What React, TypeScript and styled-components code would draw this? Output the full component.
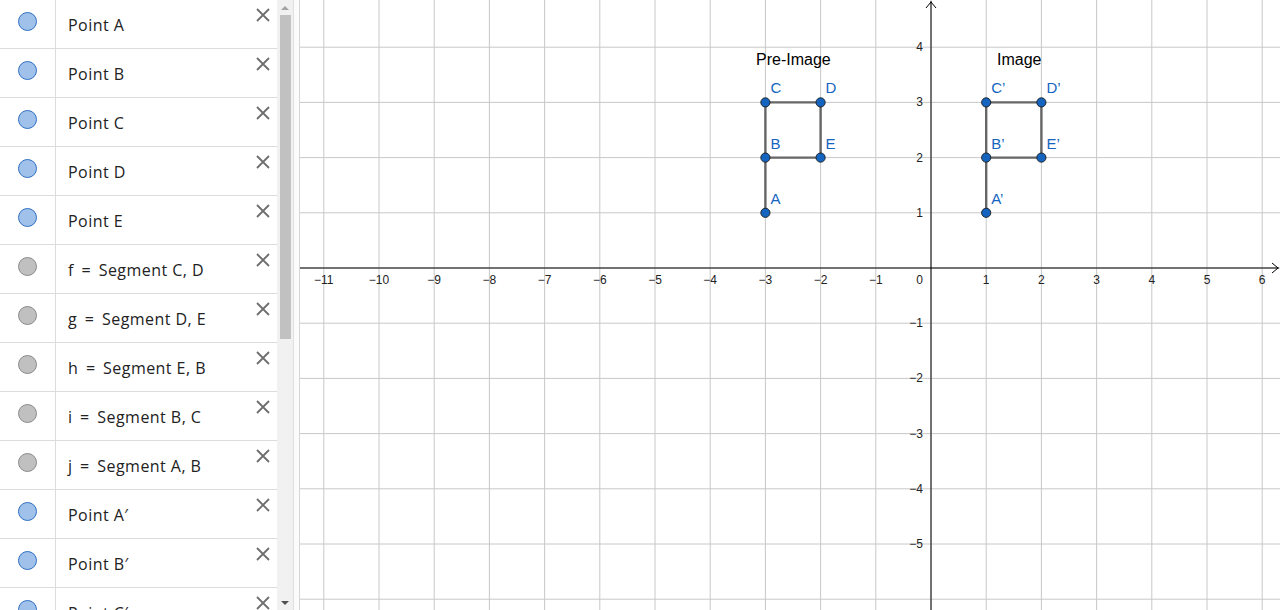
import React from 'react'
import styled, { createGlobalStyle } from 'styled-components'

const GlobalStyle = createGlobalStyle`
  html, body {
    margin: 0;
    padding: 0;
    background: #ffffff;
    overflow: hidden;
  }
`

const Layout = styled.div`
  display: flex;
  width: 1280px;
  height: 610px;
  overflow: hidden;
  font-family: 'Open Sans', 'Noto Sans', sans-serif;
`

const AlgebraPanel = styled.aside`
  display: flex;
  width: 293px;
  height: 100%;
  flex-shrink: 0;
`

const List = styled.div`
  width: 277px;
  height: 100%;
  overflow: hidden;
`

const Row = styled.div`
  display: flex;
  height: 48px;
  border-bottom: 1px solid #dcdcdc;
`

const MarbleCell = styled.div`
  width: 56px;
  flex-shrink: 0;
  border-right: 1px solid #dcdcdc;
  display: flex;
  justify-content: center;
  padding-top: 12px;
  box-sizing: border-box;
`

const Marble = styled.span<{ $kind: 'point' | 'segment' }>`
  width: 17px;
  height: 17px;
  border-radius: 50%;
  background: ${(p) => (p.$kind === 'point' ? '#9fc1ea' : '#c0c0c0')};
  border: 1px solid ${(p) => (p.$kind === 'point' ? '#2f6fc4' : '#8a8a8a')};
`

const Label = styled.div`
  flex: 1;
  padding: 14px 0 0 12px;
  font-size: 16px;
  letter-spacing: 0.45px;
  color: #222;
  white-space: nowrap;
`

const Equals = styled.span`
  margin: 0 3px;
`

const CloseButton = styled.button`
  width: 24px;
  height: 24px;
  margin: 3px 2px 0 0;
  padding: 0;
  border: none;
  background: none;
  display: flex;
  align-items: center;
  justify-content: center;
  color: #6e6e6e;
`

const Scrollbar = styled.div`
  width: 16px;
  height: 100%;
  background: #f1f1f1;
  display: flex;
  flex-direction: column;
  align-items: center;
`

const ScrollArrow = styled.div<{ $down?: boolean }>`
  height: 15px;
  width: 100%;
  display: flex;
  align-items: center;
  justify-content: center;
  margin-top: ${(p) => (p.$down ? 'auto' : '0')};
  &::after {
    content: '';
    border-left: 4px solid transparent;
    border-right: 4px solid transparent;
    ${(p) => (p.$down ? 'border-top: 4px solid #505050;' : 'border-bottom: 4px solid #a3a3a3;')}
  }
`

const Thumb = styled.div`
  width: 11px;
  height: 324px;
  background: #c1c1c1;
`

const Splitter = styled.div`
  width: 5px;
  flex-shrink: 0;
  background: #fbfbfb;
  border-left: 1px solid #e0e0e0;
  border-right: 1px solid #d6d6d6;
`

const GraphView = styled.main`
  flex: 1;
  height: 100%;
  background: #fff;
  svg {
    display: block;
  }
`

type Item = { kind: 'point' | 'segment'; name?: string; text: string }

const items: Item[] = [
  { kind: 'point', text: 'Point A' },
  { kind: 'point', text: 'Point B' },
  { kind: 'point', text: 'Point C' },
  { kind: 'point', text: 'Point D' },
  { kind: 'point', text: 'Point E' },
  { kind: 'segment', name: 'f', text: 'Segment C, D' },
  { kind: 'segment', name: 'g', text: 'Segment D, E' },
  { kind: 'segment', name: 'h', text: 'Segment E, B' },
  { kind: 'segment', name: 'i', text: 'Segment B, C' },
  { kind: 'segment', name: 'j', text: 'Segment A, B' },
  { kind: 'point', text: 'Point A\u2032' },
  { kind: 'point', text: 'Point B\u2032' },
  { kind: 'point', text: 'Point C\u2032' },
]

const CloseIcon = () => (
  <svg width="16" height="16" viewBox="0 0 16 16">
    <path d="M2 2 L14 14 M14 2 L2 14" stroke="currentColor" strokeWidth="1.8" />
  </svg>
)

// graph coordinates
const W = 980
const H = 610
const OX = 631
const OY = 268
const U = 55.2
const gx = (v: number) => OX + v * U
const gy = (v: number) => OY - v * U

const BLUE = '#1565c0'

const shapes = [
  { dx: 0, title: 'Pre-Image', tx: 456, suffix: '' },
  { dx: 4, title: 'Image', tx: 697, suffix: '\u2019' },
]

function Graph() {
  const xs: number[] = []
  for (let i = -12; i <= 7; i++) xs.push(i)
  const ys: number[] = []
  for (let i = -7; i <= 5; i++) ys.push(i)

  return (
    <svg width={W} height={H} viewBox={`0 0 ${W} ${H}`} fontFamily="'Liberation Sans', Arial, sans-serif">
      {xs.map((i) => (
        <line key={'vx' + i} x1={gx(i)} y1={0} x2={gx(i)} y2={H} stroke="#c8c8c8" strokeWidth={1} />
      ))}
      {ys.map((i) => (
        <line key={'hy' + i} x1={0} y1={gy(i)} x2={W} y2={gy(i)} stroke="#c8c8c8" strokeWidth={1} />
      ))}
      <line x1={0} y1={OY} x2={W - 1} y2={OY} stroke="#000" strokeWidth={1} />
      <path d={`M${W - 8} ${OY - 5} L${W - 2} ${OY} L${W - 8} ${OY + 5}`} fill="none" stroke="#000" strokeWidth={1} />
      <line x1={OX} y1={1} x2={OX} y2={H} stroke="#000" strokeWidth={1} />
      <path d={`M${OX - 5} 8 L${OX} 2 L${OX + 5} 8`} fill="none" stroke="#000" strokeWidth={1} />

      {xs
        .filter((i) => i >= -11 && i <= 6 && i !== 0)
        .map((i) => (
          <text key={'lx' + i} x={gx(i)} y={OY + 16} fontSize={12} fill="#222" textAnchor="middle">
            {i < 0 ? '\u2212' + -i : i}
          </text>
        ))}
      <text x={OX - 8} y={OY + 16} fontSize={12} fill="#222" textAnchor="end">
        0
      </text>
      {ys
        .filter((i) => i >= -5 && i <= 4 && i !== 0)
        .map((i) => (
          <text key={'ly' + i} x={OX - 8} y={gy(i) + 4} fontSize={12} fill="#222" textAnchor="end">
            {i < 0 ? '\u2212' + -i : i}
          </text>
        ))}

      {shapes.map((s) => {
        const A = [gx(-3 + s.dx), gy(1)]
        const B = [gx(-3 + s.dx), gy(2)]
        const C = [gx(-3 + s.dx), gy(3)]
        const D = [gx(-2 + s.dx), gy(3)]
        const E = [gx(-2 + s.dx), gy(2)]
        const pts: [string, number[]][] = [
          ['A', A],
          ['B', B],
          ['C', C],
          ['D', D],
          ['E', E],
        ]
        return (
          <g key={s.title}>
            <text x={s.tx} y={65} fontSize={16} fill="#000">
              {s.title}
            </text>
            <path
              d={`M${C[0]} ${C[1]} L${D[0]} ${D[1]} L${E[0]} ${E[1]} L${B[0]} ${B[1]} Z M${B[0]} ${B[1]} L${A[0]} ${A[1]}`}
              fill="none"
              stroke="#666"
              strokeWidth={2.4}
            />
            {pts.map(([n, p]) => (
              <circle key={n} cx={p[0]} cy={p[1]} r={4.6} fill={BLUE} stroke="#1a1a1a" strokeWidth={0.9} />
            ))}
            {pts.map(([n, p]) => (
              <text key={'t' + n} x={p[0] + 5} y={p[1] - 9} fontSize={15} fill={BLUE}>
                {n + s.suffix}
              </text>
            ))}
          </g>
        )
      })}
    </svg>
  )
}

export default function App() {
  return (
    <Layout>
      <GlobalStyle />
      <AlgebraPanel>
        <List>
          {items.map((it) => (
            <Row key={it.text + (it.name ?? '')}>
              <MarbleCell>
                <Marble $kind={it.kind} />
              </MarbleCell>
              <Label>
                {it.name && (
                  <>
                    {it.name} <Equals>=</Equals>{' '}
                  </>
                )}
                {it.text}
              </Label>
              <CloseButton aria-label="delete">
                <CloseIcon />
              </CloseButton>
            </Row>
          ))}
        </List>
        <Scrollbar>
          <ScrollArrow />
          <Thumb />
          <ScrollArrow $down />
        </Scrollbar>
      </AlgebraPanel>
      <Splitter />
      <GraphView>
        <Graph />
      </GraphView>
    </Layout>
  )
}
